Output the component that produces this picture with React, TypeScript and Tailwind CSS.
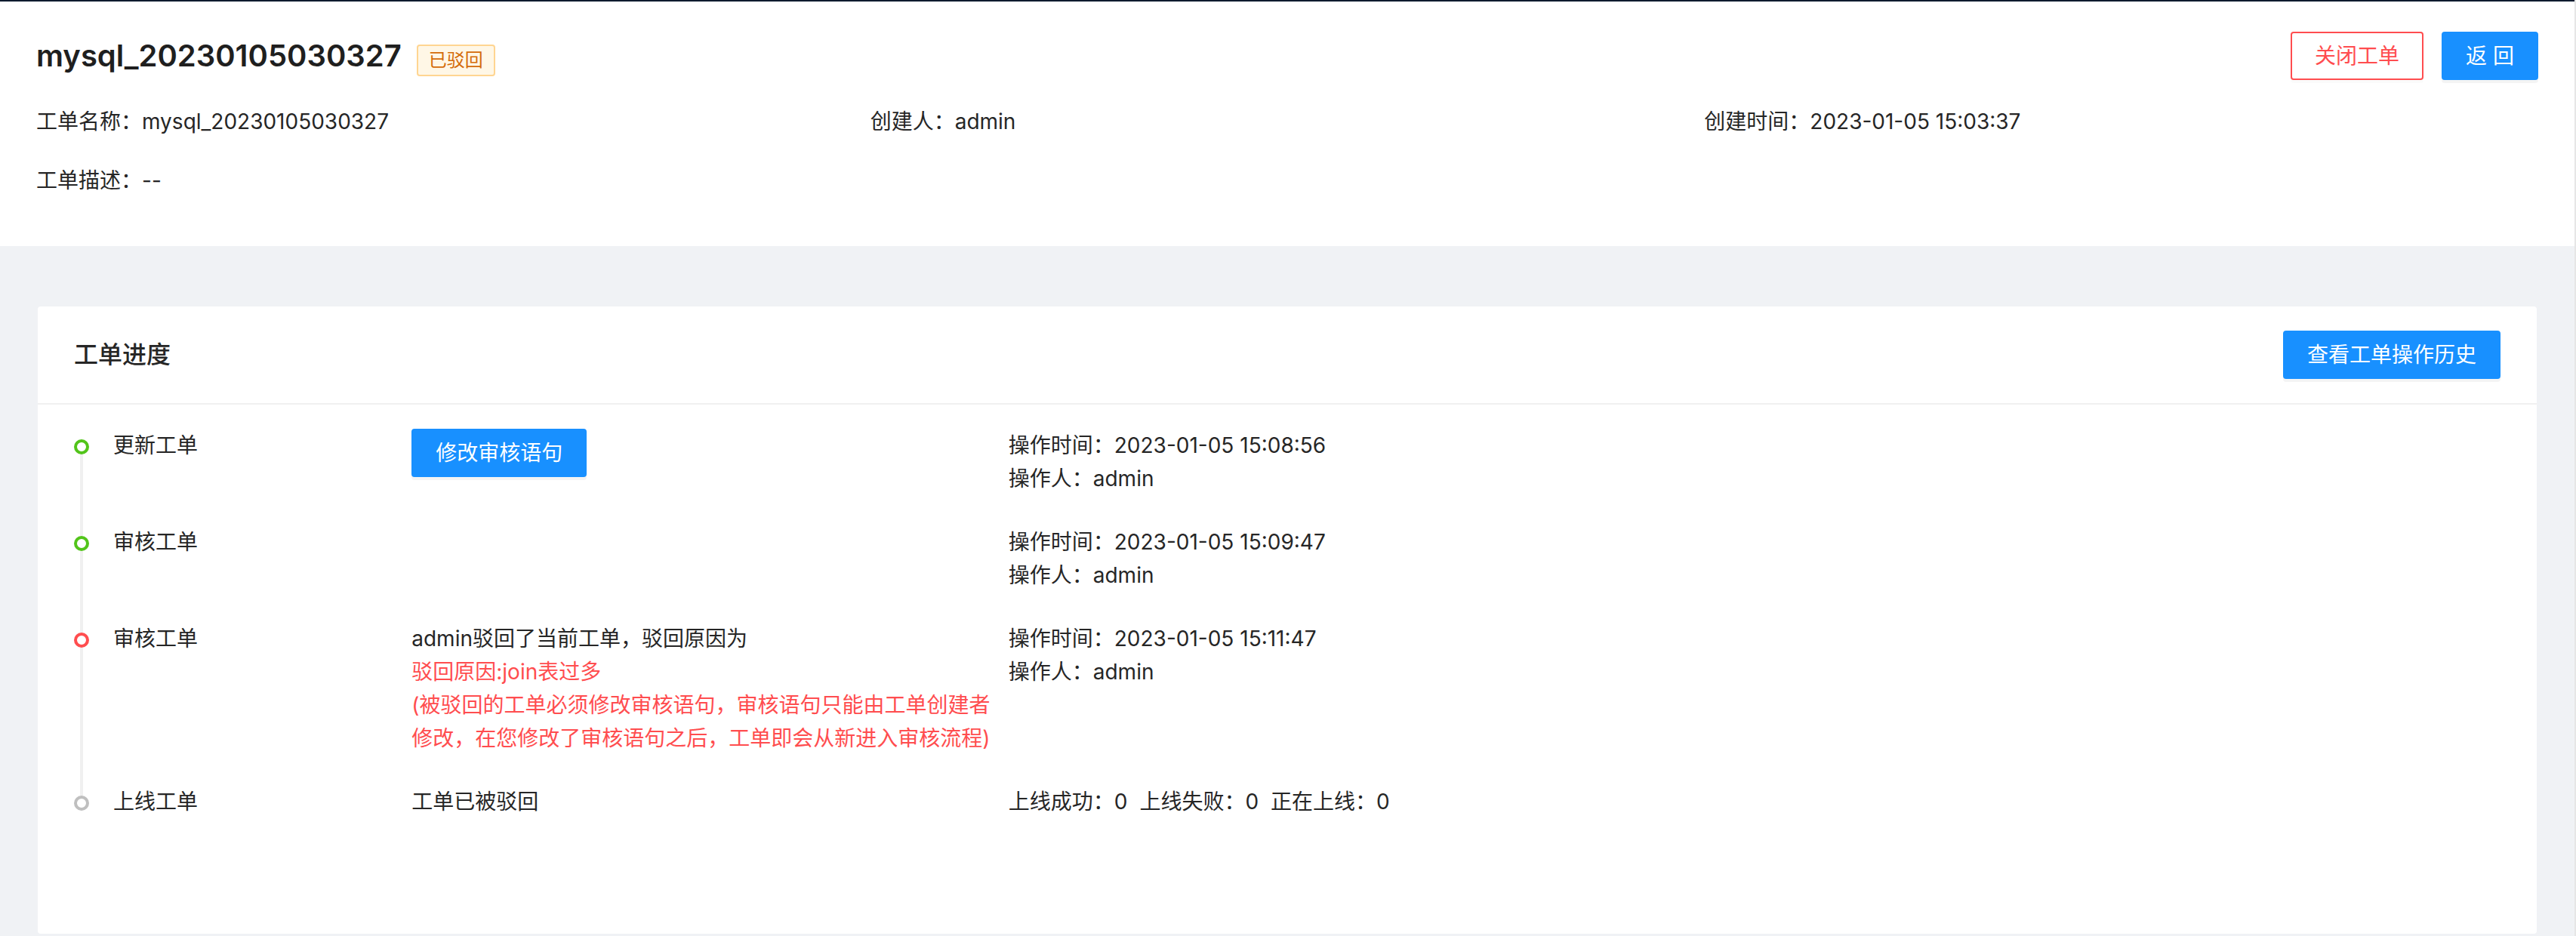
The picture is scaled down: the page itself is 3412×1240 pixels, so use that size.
import React from "react";

type Step = {
  title: string;
  color: string;
  content: React.ReactNode;
  info: React.ReactNode;
};

const font = { fontFamily: 'Inter, "Noto Sans CJK SC", sans-serif' };

function OpInfo({ time }: { time: string }) {
  return (
    <>
      <div>操作时间：{time}</div>
      <div>操作人：admin</div>
    </>
  );
}

export default function App() {
  const steps: Step[] = [
    {
      title: "更新工单",
      color: "border-[#52c41a]",
      content: (
        <button className="h-[64px] rounded-[4px] border-2 border-[#1890ff] bg-[#1890ff] px-[30px] text-[28px] leading-[44px] text-white shadow-[0_4px_0_rgba(0,0,0,0.045)]">
          修改审核语句
        </button>
      ),
      info: <OpInfo time="2023-01-05 15:08:56" />,
    },
    {
      title: "审核工单",
      color: "border-[#52c41a]",
      content: null,
      info: <OpInfo time="2023-01-05 15:09:47" />,
    },
    {
      title: "审核工单",
      color: "border-[#ff4d4f]",
      content: (
        <>
          <div>admin驳回了当前工单，驳回原因为</div>
          <div className="text-[#ff4d4f]">驳回原因:join表过多</div>
          <div className="text-[#ff4d4f]">
            (被驳回的工单必须修改审核语句，审核语句只能由工单创建者修改，在您修改了审核语句之后，工单即会从新进入审核流程)
          </div>
        </>
      ),
      info: <OpInfo time="2023-01-05 15:11:47" />,
    },
    {
      title: "上线工单",
      color: "border-[#bfbfbf]",
      content: <div>工单已被驳回</div>,
      info: (
        <div className="flex">
          <span className="mr-[16px]">上线成功：0</span>
          <span className="mr-[16px]">上线失败：0</span>
          <span>正在上线：0</span>
        </div>
      ),
    },
  ];

  return (
    <div className="flex min-h-screen bg-[#f0f2f5] text-[#262626]" style={font}>
      <div className="flex min-w-0 flex-1 flex-col">
        <div className="h-[2px] bg-[#0b1a2e]" />

        {/* page header */}
        <header className="bg-white px-[48px] pt-[40px] pb-[65px]">
          <div className="flex h-[64px] items-center justify-between">
            <div className="flex items-center">
              <h1 className="text-[40px] font-semibold leading-[64px] text-[#1f1f1f]">
                mysql_20230105030327
              </h1>
              <span className="ml-[20px] mt-[12px] rounded-[4px] border-2 border-[#ffd591] bg-[#fff7e6] px-[14px] text-[24px] leading-[38px] text-[#d46b08]">
                已驳回
              </span>
            </div>
            <div className="flex items-center gap-[24px]">
              <button className="h-[64px] rounded-[4px] border-2 border-[#ff4d4f] bg-white px-[30px] text-[28px] text-[#ff4d4f] shadow-[0_4px_0_rgba(0,0,0,0.015)]">
                关闭工单
              </button>
              <button className="h-[64px] rounded-[4px] border-2 border-[#1890ff] bg-[#1890ff] px-[30px] text-[28px] text-white shadow-[0_4px_0_rgba(0,0,0,0.045)]">
                返 回
              </button>
            </div>
          </div>
          <div className="mt-[33px] grid grid-cols-3 text-[28px] leading-[44px]">
            <div>工单名称：mysql_20230105030327</div>
            <div>创建人：admin</div>
            <div>创建时间：2023-01-05 15:03:37</div>
          </div>
          <div className="mt-[34px] text-[28px] leading-[44px]">工单描述：--</div>
        </header>

        {/* progress card */}
        <main className="px-[50px] pt-[80px] pb-[3px]">
          <div className="flex h-[831px] flex-col rounded-[4px] bg-white">
            <div className="flex h-[130px] items-center justify-between border-b-2 border-[#f0f0f0] px-[48px]">
              <h3 className="text-[32px] font-medium leading-[48px]">工单进度</h3>
              <button className="h-[64px] rounded-[4px] border-2 border-[#1890ff] bg-[#1890ff] px-[30px] text-[28px] text-white shadow-[0_4px_0_rgba(0,0,0,0.045)]">
                查看工单操作历史
              </button>
            </div>

            <div className="px-[48px] pt-[32px]">
              {steps.map((s, i) => {
                const last = i === steps.length - 1;
                return (
                  <div key={i} className="relative flex pb-[40px]">
                    {!last && (
                      <div className="absolute left-[8px] top-[34px] -bottom-[14px] w-[4px] bg-[#f0f0f0]" />
                    )}
                    <div
                      className={`relative mt-[14px] h-[20px] w-[20px] shrink-0 rounded-full border-[4px] bg-white ${s.color}`}
                    />
                    <div className="ml-[32px] flex min-w-0 flex-1 text-[28px] leading-[44px]">
                      <div className="w-[12.5%] shrink-0">{s.title}</div>
                      <div className="w-[25%] shrink-0">{s.content}</div>
                      <div className="min-w-0 flex-1">{s.info}</div>
                    </div>
                  </div>
                );
              })}
            </div>
          </div>
        </main>
      </div>
      <div className="w-[2px] shrink-0 bg-[#e6e6e6]" />
    </div>
  );
}
